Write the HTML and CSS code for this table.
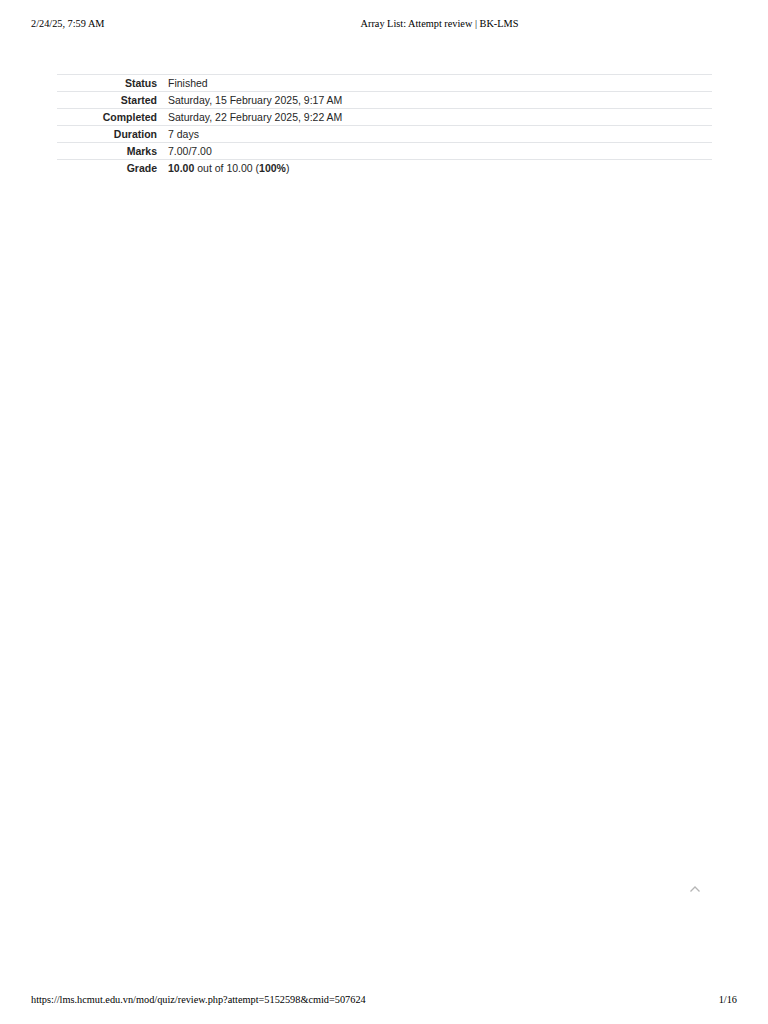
FILE: index.html
```html
<!DOCTYPE html>
<html>
<head>
<meta charset="utf-8">
<link rel="stylesheet" href="styles.css">
</head>
<body>
<div class="page">
  <header class="print-head">
    <span class="date">2/24/25, 7:59 AM</span>
    <span class="title">Array List: Attempt review | BK-LMS</span>
  </header>
  <main class="content">
    <table class="summary">
      <tbody>
        <tr><th>Status</th><td>Finished</td></tr>
        <tr><th>Started</th><td>Saturday, 15 February 2025, 9:17 AM</td></tr>
        <tr><th>Completed</th><td>Saturday, 22 February 2025, 9:22 AM</td></tr>
        <tr><th>Duration</th><td>7 days</td></tr>
        <tr><th>Marks</th><td>7.00/7.00</td></tr>
        <tr><th>Grade</th><td><b>10.00</b> out of 10.00 (<b>100%</b>)</td></tr>
      </tbody>
    </table>
    <div class="to-top">
      <svg width="12" height="8" viewBox="0 0 12 8"><path d="M1.5 6.5 L6 2 L10.5 6.5" fill="none" stroke="#b5b5b5" stroke-width="1.3"/></svg>
    </div>
  </main>
  <footer class="print-foot">
    <span class="url">https://lms.hcmut.edu.vn/mod/quiz/review.php?attempt=5152598&amp;cmid=507624</span>
    <span class="pages">1/16</span>
  </footer>
</div>
</body>
</html>
```

FILE: styles.css
```css
html, body {
  margin: 0;
  padding: 0;
  background: #fff;
}
.page {
  width: 768px;
  height: 1024px;
  display: flex;
  flex-direction: column;
  box-sizing: border-box;
}
.print-head {
  display: flex;
  height: 16px;
  margin-top: 16px;
  padding: 0 0 0 31px;
  font-family: "Liberation Serif", serif;
  font-size: 10.3px;
  color: #000;
  line-height: 16px;
}
.print-head .title {
  margin-left: 256px;
}
.content {
  flex: 1;
  display: flex;
  flex-direction: column;
  padding: 42px 56px 0 57px;
  position: relative;
}
.summary {
  width: 655px;
  border-collapse: collapse;
  font-family: "Liberation Sans", Arial, sans-serif;
  font-size: 10.5px;
  color: #262626;
}
.summary tr {
  height: 17px;
  border-top: 1px solid #e3e5e8;
}
.summary th {
  width: 100px;
  text-align: right;
  font-weight: bold;
  padding: 0 10px 1px 0;
  white-space: nowrap;
}
.summary td {
  padding: 0 0 1px 1px;
  text-align: left;
}
.to-top {
  position: absolute;
  left: 689px;
  top: 853px;
  width: 12px;
  height: 8px;
  display: flex;
}
.print-foot {
  display: flex;
  justify-content: space-between;
  height: 16px;
  margin-bottom: 16px;
  padding: 0 31px 0 31px;
  font-family: "Liberation Serif", serif;
  font-size: 10.3px;
  line-height: 16px;
  color: #000;
}
```
